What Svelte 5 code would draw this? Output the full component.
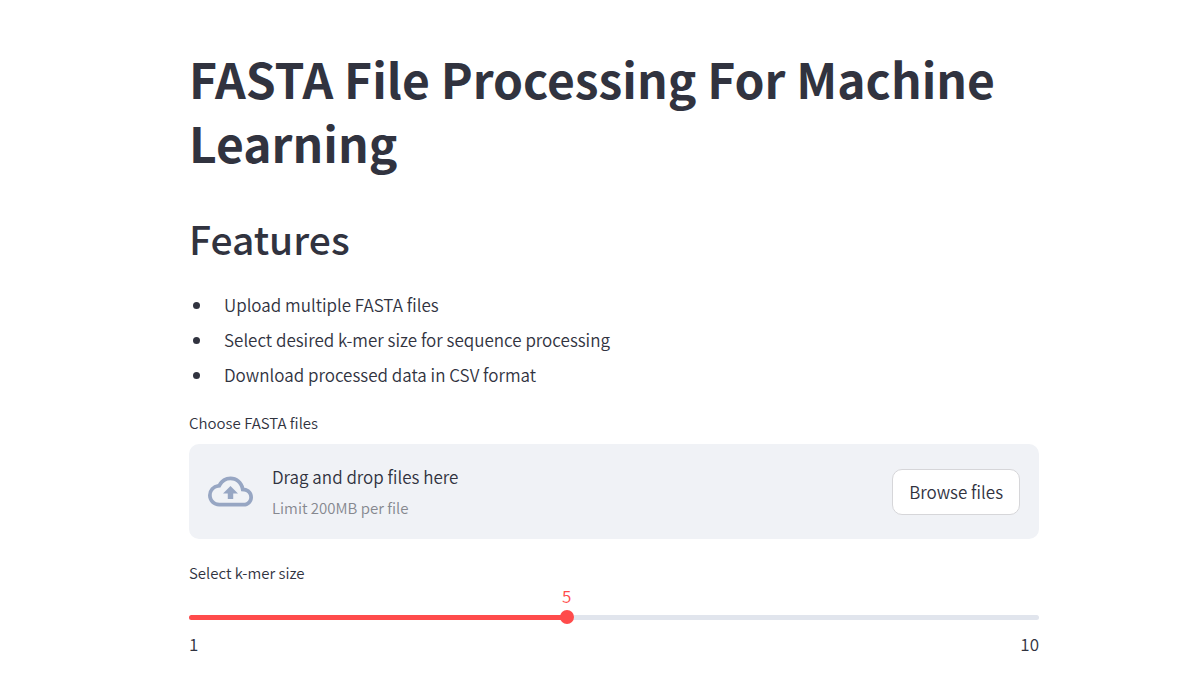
<script lang="ts">
  const features = [
    "Upload multiple FASTA files",
    "Select desired k-mer size for sequence processing",
    "Download processed data in CSV format",
  ];
  const min = 1;
  const max = 10;

  let kmer = $state(5);
  let fileInput: HTMLInputElement;
  let percent = $derived(((kmer - min) / (max - min)) * 100);
</script>

<main>
  <h1>FASTA File Processing For Machine Learning</h1>
  <h2>Features</h2>
  <ul>
    {#each features as feature}
      <li>{feature}</li>
    {/each}
  </ul>

  <section class="uploader">
    <label for="fasta-files">Choose FASTA files</label>
    <div class="dropzone">
      <svg class="cloud" viewBox="0 0 24 24" aria-hidden="true">
        <path
          d="M19.35 10.04A7.49 7.49 0 0 0 12 4C9.11 4 6.6 5.64 5.35 8.04A5.994 5.994 0 0 0 0 14c0 3.31 2.69 6 6 6h13c2.76 0 5-2.24 5-5 0-2.64-2.05-4.78-4.65-4.96zM19 18H6c-2.21 0-4-1.79-4-4 0-2.05 1.53-3.76 3.56-3.97l1.07-.11.5-.95A5.469 5.469 0 0 1 12 6c2.62 0 4.88 1.86 5.39 4.43l.3 1.5 1.53.11A2.98 2.98 0 0 1 22 15c0 1.65-1.35 3-3 3zM8 13h2.55v3h2.9v-3H16l-4-4z"
        />
      </svg>
      <div class="instructions">
        <span>Drag and drop files here</span>
        <small>Limit 200MB per file</small>
      </div>
      <input id="fasta-files" type="file" multiple hidden bind:this={fileInput} />
      <button type="button" onclick={() => fileInput.click()}>Browse files</button>
    </div>
  </section>

  <section class="slider">
    <label for="kmer-size">Select k-mer size</label>
    <div class="control">
      <div class="track">
        <div class="filled" style="width: {percent}%"></div>
      </div>
      <input id="kmer-size" type="range" {min} {max} bind:value={kmer} />
      <output for="kmer-size" style="left: {percent}%">{kmer}</output>
    </div>
    <div class="ticks">
      <span>{min}</span>
      <span>{max}</span>
    </div>
  </section>
</main>

<style>
  :global(body) {
    margin: 0;
    padding-left: 28px;
    background: #fff;
  }

  main {
    max-width: 850px;
    margin: 0 auto;
    padding: 46px 24px 24px;
    color: #31333f;
    font-family: "Noto Sans CJK SC", "Source Sans Pro", sans-serif;
    font-size: 17px;
    font-weight: 350;
    line-height: 27px;
  }

  h1 {
    margin: 0;
    font-size: 48px;
    font-weight: 700;
    line-height: 64px;
  }

  h2 {
    margin: 38px 0 0;
    font-size: 39px;
    font-weight: 500;
    line-height: 52px;
  }

  ul {
    display: flex;
    flex-direction: column;
    gap: 8px;
    margin: 27px 0 0;
    padding: 0 0 0 24px;
  }

  li {
    padding-left: 11px;
  }

  label {
    display: block;
    font-size: 15px;
    line-height: 24px;
  }

  .uploader {
    margin-top: 23px;
  }

  .dropzone {
    display: flex;
    align-items: center;
    margin-top: 9px;
    padding: 19px;
    border-radius: 10px;
    background: #f0f2f6;
  }

  .cloud {
    width: 45px;
    height: 45px;
    margin-right: 19px;
    fill: #97a6c3;
  }

  .instructions {
    display: flex;
    flex: 1;
    flex-direction: column;
    gap: 6px;
  }

  small {
    color: #86888f;
    font-size: 15px;
    line-height: 24px;
  }

  button {
    padding: 8px 16px 9px;
    border: 1px solid #d6d6d9;
    border-radius: 10px;
    background: #fff;
    color: inherit;
    font: inherit;
    cursor: pointer;
  }

  .slider {
    margin-top: 22px;
  }

  .control {
    position: relative;
    display: grid;
    align-items: center;
    margin-top: 25px;
  }

  .track,
  .control input {
    grid-area: 1 / 1;
  }

  .track {
    height: 5px;
    border-radius: 5px;
    background: #e1e5ed;
    overflow: hidden;
  }

  .filled {
    height: 100%;
    background: #ff4b4b;
  }

  /* wider than the track by one thumb, so the thumb centre meets both ends */
  .control input {
    height: 14px;
    margin: 0 -7px;
    appearance: none;
    background: transparent;
    cursor: pointer;
  }

  .control input::-webkit-slider-thumb {
    width: 14px;
    height: 14px;
    border-radius: 50%;
    appearance: none;
    background: #ff4b4b;
  }

  output {
    position: absolute;
    bottom: 100%;
    padding-bottom: 1px;
    color: #ff4b4b;
    transform: translateX(-50%);
  }

  .ticks {
    display: flex;
    justify-content: space-between;
    margin-top: 6px;
  }
</style>
